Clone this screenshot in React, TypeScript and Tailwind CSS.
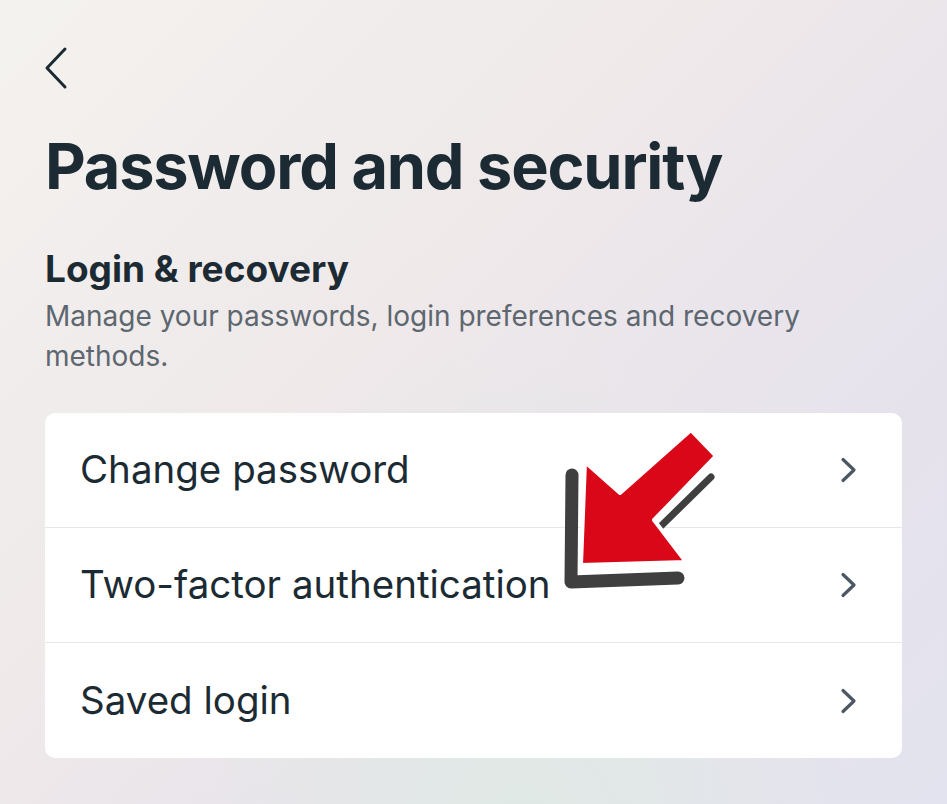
const rows = ["Change password", "Two-factor authentication", "Saved login"];

function Arrow() {
  return (
    <svg
      className="absolute left-[560px] top-[425px] pointer-events-none"
      width="170"
      height="175"
      viewBox="560 425 170 175"
    >
      {/* dark shadow */}
      <path
        d="M572 475 L571 582 L678 578"
        fill="none"
        stroke="#3f3f3f"
        strokeWidth="13"
        strokeLinecap="round"
        strokeLinejoin="round"
      />
      <path d="M711 477 L661 526" stroke="#3f3f3f" strokeWidth="7" strokeLinecap="round" />
      {/* red arrow */}
      <polygon
        points="691,430 716,456 654,520 686,562 581,565 585,462 620,493"
        fill="#d90718"
        stroke="#ffffff"
        strokeWidth="4"
        strokeLinejoin="round"
      />
    </svg>
  );
}

export default function App() {
  return (
    <div
      className="relative w-[947px] h-[804px] overflow-hidden bg-[radial-gradient(ellipse_at_55%_110%,#dfe9e4_0%,transparent_45%),linear-gradient(135deg,#f4f2ef_0%,#efe9ea_40%,#e6e2ec_75%,#e2e3ee_100%)]"
      style={{ fontFamily: "Inter, 'Noto Sans', sans-serif" }}
    >
      <div className="px-[45px] pt-[46px]">
        {/* Back */}
        <svg width="24" height="44" viewBox="0 0 24 44" className="-ml-[1px]">
          <path d="M21 3 L3 22 L21 41" fill="none" stroke="#1c2b33" strokeWidth="3" strokeLinecap="round" strokeLinejoin="round" />
        </svg>

        <h1 className="mt-[38px] text-[63px] leading-[76px] font-bold tracking-[-1.2px] text-[#1c2b33]">
          Password and security
        </h1>

        <h2 className="mt-[42px] text-[37px] leading-[46px] font-bold text-[#1c2b33]">
          Login &amp; recovery
        </h2>
        <p className="mt-[4px] w-[820px] text-[28px] leading-[40px] text-[#5d6770]">
          Manage your passwords, login preferences and recovery methods.
        </p>

        <div className="mt-[37px] rounded-[10px] bg-white">
          {rows.map((label, i) => (
            <div
              key={label}
              className={`flex h-[115px] items-center justify-between pl-[35px] pr-[44px] ${
                i < rows.length - 1 ? "border-b border-[#e6e7ea]" : ""
              }`}
            >
              <span className="text-[38.5px] font-normal text-[#1c2b33]">{label}</span>
              <svg width="18" height="26" viewBox="0 0 18 26">
                <path d="M3 2.5 L14 13 L3 23.5" fill="none" stroke="#4b5763" strokeWidth="3.2" strokeLinecap="round" strokeLinejoin="round" />
              </svg>
            </div>
          ))}
        </div>
      </div>
      <Arrow />
    </div>
  );
}
